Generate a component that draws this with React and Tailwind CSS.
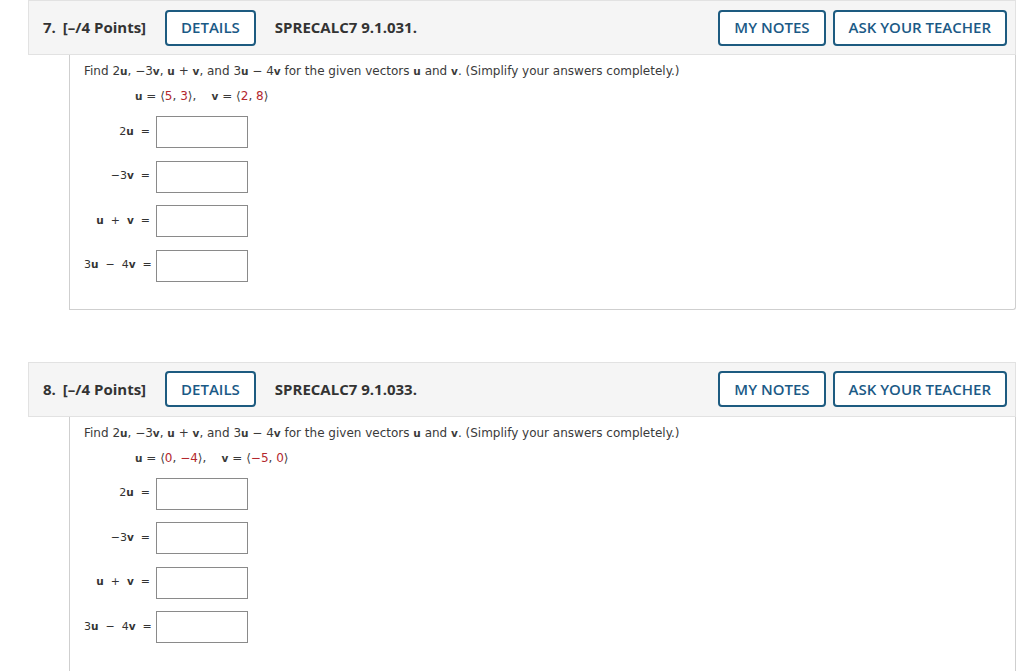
import React from "react";

const B = ({ children }) => (
  <b className="font-bold text-[10.5px] [font-family:'DejaVu_Sans',sans-serif]">{children}</b>
);
const R = ({ children }) => <span className="text-[#b3272d]">{children}</span>;

function Btn({ children }) {
  return (
    <button className="h-[36px] px-[14px] border-2 border-[#1d5b80] rounded-[4px] bg-white text-[#1b5a86] text-[15px] font-semibold [font-family:'Open_Sans',sans-serif] leading-none">
      {children}
    </button>
  );
}

function Header({ num, code }) {
  return (
    <div className="h-[55px] bg-[#f5f5f5] border border-[#e2e2e2] flex items-center pl-[14px] pr-[8px] [font-family:'Open_Sans',sans-serif]">
      <span className="font-bold text-[15px] text-[#333]">{num}.</span>
      <span className="font-bold text-[15px] text-[#333] ml-[7px]">[–/4 Points]</span>
      <div className="ml-[19px]">
        <Btn>DETAILS</Btn>
      </div>
      <span className="ml-[19px] font-bold text-[15px] text-[#333]">SPRECALC7 {code}.</span>
      <div className="ml-auto flex gap-[7px]">
        <Btn>MY NOTES</Btn>
        <Btn>ASK YOUR TEACHER</Btn>
      </div>
    </div>
  );
}

function Row({ label }) {
  return (
    <div className="flex items-center h-[32px]">
      <div className="w-[72px] text-right pr-[6px] text-[11px] text-[#333] whitespace-pre">{label}</div>
      <div className="w-[92px] h-[32px] border border-[#8a8a8a] bg-white"></div>
    </div>
  );
}

function Problem({ num, code, u, v, last }) {
  return (
    <div>
      <Header num={num} code={code} />
      <div className={last
        ? "ml-[41px] border-l border-r border-b border-[#cfcfcf] rounded-br-[3px] pl-[14px] pt-[6px] pb-[60px] [font-family:'DejaVu_Sans',Verdana,sans-serif] text-[12px] text-[#3a3a3a]"
        : "ml-[41px] border-l border-r border-b border-[#cfcfcf] rounded-br-[3px] pl-[14px] pt-[6px] pb-[27px] [font-family:'DejaVu_Sans',Verdana,sans-serif] text-[12px] text-[#3a3a3a]"}>
        <div className="leading-[20px]">
          Find 2<B>u</B>, −3<B>v</B>, <B>u</B> + <B>v</B>, and 3<B>u</B> − 4<B>v</B> for the given vectors <B>u</B> and <B>v</B>. (Simplify your answers completely.)
        </div>
        <div className="leading-[20px] mt-[5px] ml-[51px]">
          <B>u</B> = ⟨{u}⟩,&nbsp;&nbsp;&nbsp; <B>v</B> = ⟨{v}⟩
        </div>
        <div className="mt-[10px] flex flex-col gap-[12.5px]">
          <Row label={<><span>2</span><B>u</B><span>  =</span></>} />
          <Row label={<><span>−3</span><B>v</B><span>  =</span></>} />
          <Row label={<><B>u</B><span>  +  </span><B>v</B><span>  =</span></>} />
          <Row label={<><span>3</span><B>u</B><span>  −  4</span><B>v</B><span>  =</span></>} />
        </div>
      </div>
    </div>
  );
}

export default function App() {
  return (
    <div className="w-[1024px] h-[671px] overflow-hidden bg-white pl-[28px] pr-[8px]">
      <Problem num={7} code="9.1.031" u={<><R>5</R>, <R>3</R></>} v={<><R>2</R>, <R>8</R></>} />
      <div className="h-[52px]"></div>
      <Problem num={8} code="9.1.033" u={<><R>0</R>, <R>−4</R></>} v={<><R>−5</R>, <R>0</R></>} last />
    </div>
  );
}
